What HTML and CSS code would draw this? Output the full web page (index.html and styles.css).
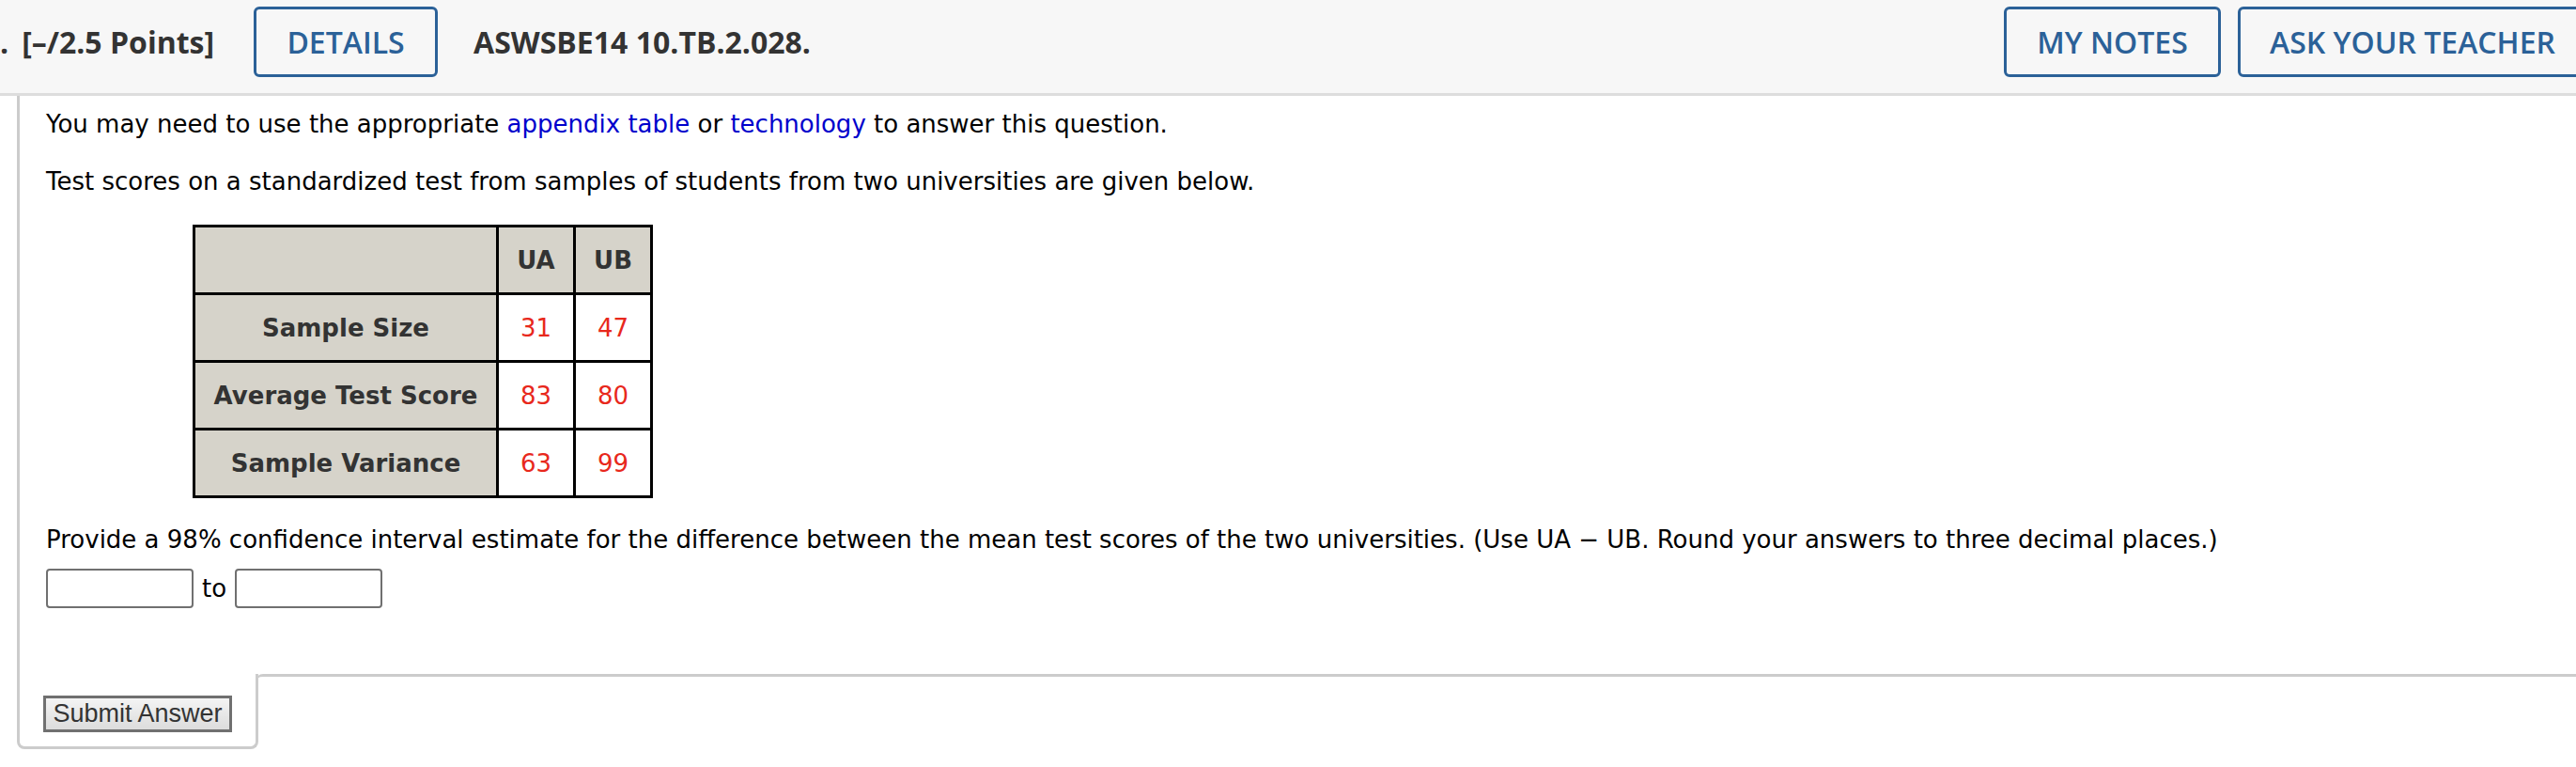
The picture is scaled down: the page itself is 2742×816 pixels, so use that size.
FILE: index.html
```html
<!DOCTYPE html>
<html>
<head>
<meta charset="utf-8">
<link rel="stylesheet" href="styles.css">
</head>
<body>
<div class="header">
  <span class="qnum">.</span>
  <span class="points">[–/2.5 Points]</span>
  <button class="hbtn details">DETAILS</button>
  <span class="qid">ASWSBE14 10.TB.2.028.</span>
  <div class="spacer"></div>
  <button class="hbtn notes">MY NOTES</button>
  <button class="hbtn ask">ASK YOUR TEACHER</button>
</div>
<div class="question">
  <div class="qbody">
    <p class="line first">You may need to use the appropriate <a class="link" href="#">appendix table</a> or <a class="link" href="#">technology</a> to answer this question.</p>
    <p class="line">Test scores on a standardized test from samples of students from two universities are given below.</p>
    <table class="data">
      <tr><th class="label"></th><th class="col">UA</th><th class="col">UB</th></tr>
      <tr><th class="label">Sample Size</th><td class="val">31</td><td class="val">47</td></tr>
      <tr><th class="label">Average Test Score</th><td class="val">83</td><td class="val">80</td></tr>
      <tr><th class="label">Sample Variance</th><td class="val">63</td><td class="val">99</td></tr>
    </table>
    <p class="line">Provide a 98% confidence interval estimate for the difference between the mean test scores of the two universities. (Use UA − UB. Round your answers to three decimal places.)</p>
    <div class="answers">
      <input class="ans" type="text">
      <span class="to">to</span>
      <input class="ans" type="text">
    </div>
  </div>
  <div class="footer">
    <div class="tab"><button class="submit">Submit Answer</button></div>
    <div class="rest"></div>
  </div>
</div>
</body>
</html>
```
FILE: styles.css
```css
html, body {
  margin: 0;
  padding: 0;
  background: #ffffff;
}
body {
  width: 2742px;
  overflow: hidden;
  font-family: "DejaVu Sans", Verdana, sans-serif;
}
.header {
  display: flex;
  align-items: center;
  height: 89px;
  padding-bottom: 10px;
  background: #f7f7f7;
  border-bottom: 3px solid #dddddd;
  font-family: "Open Sans", sans-serif;
  font-weight: 700;
  font-size: 32px;
  color: #333333;
  white-space: nowrap;
}
.qnum {
  margin-left: 0;
}
.points {
  margin-left: 14px;
}
.hbtn {
  font-family: "Open Sans", sans-serif;
  font-weight: 600;
  font-size: 32px;
  color: #2b6198;
  background: #f7f7f7;
  border: 3px solid #2b6198;
  border-radius: 6px;
  height: 75px;
  padding: 0;
  box-sizing: border-box;
}
.details {
  margin-left: 42px;
  width: 196px;
}
.qid {
  margin-left: 38px;
}
.spacer {
  flex: 1;
}
.notes {
  width: 231px;
}
.ask {
  margin-left: 18px;
  width: 372px;
  margin-right: -12px;
}
.question {
  margin-left: 18px;
}
.qbody {
  border-left: 3px solid #cccccc;
  padding: 13px 0 70px 28px;
}
.line {
  margin: 27px 0 0 0;
  font-size: 26px;
  line-height: 34px;
  color: #000000;
}
.line.first {
  margin-top: 0;
}
.link {
  color: #0000cc;
  text-decoration: none;
}
.data {
  margin: 29px 0 0 156px;
  border-collapse: collapse;
  border: 3px solid #000000;
}
.data th, .data td {
  border: 3px solid #000000;
  height: 69px;
  padding: 0;
  font-size: 26px;
  text-align: center;
  white-space: nowrap;
}
.data th {
  background: #d6d3ca;
  color: #333333;
  font-weight: 700;
}
.data .label {
  width: 320px;
}
.data .col {
  width: 79px;
}
.data .val {
  color: #e8281c;
  background: #ffffff;
}
.answers {
  display: flex;
  align-items: center;
  margin-top: 14px;
}
.ans {
  width: 157px;
  height: 42px;
  box-sizing: border-box;
  border: 2px solid #707070;
  border-radius: 4px;
  margin: 0;
  background: #ffffff;
}
.to {
  font-size: 26px;
  color: #000000;
  margin: 0 9px 0 9px;
}
.footer {
  display: flex;
}
.tab {
  width: 226px;
  border-left: 3px solid #cccccc;
  border-right: 3px solid #cccccc;
  border-bottom: 3px solid #cccccc;
  border-radius: 0 0 8px 8px;
  padding: 23px 0 15px 25px;
}
.submit {
  font-family: "Liberation Sans", Arial, sans-serif;
  font-size: 27px;
  color: #333333;
  width: 201px;
  height: 39px;
  padding: 0;
  border: 3px solid #707070;
  background: linear-gradient(#f4f4f4, #dcdcdc);
  border-radius: 0;
}
.rest {
  flex: 1;
  border-top: 3px solid #cccccc;
  border-top-left-radius: 8px;
  margin-left: -3px;
}
```
